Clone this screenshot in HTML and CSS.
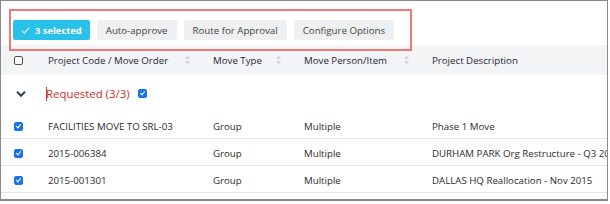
FILE: index.html
```html
<!DOCTYPE html>
<html>
<head>
<meta charset="utf-8">
<link rel="stylesheet" href="styles.css">
</head>
<body>
<div class="frame">
  <div class="toolbar">
    <button class="btn btn-primary"><svg class="chk" width="9" height="7" viewBox="0 0 9 7"><path d="M0.8 3.6 L3.3 6 L8.2 0.8" fill="none" stroke="#cdeff9" stroke-width="1.3"/></svg>3 selected</button>
    <button class="btn">Auto-approve</button>
    <button class="btn">Route for Approval</button>
    <button class="btn">Configure Options</button>
    <div class="highlight"></div>
  </div>
  <div class="grid head">
    <div class="cell cb"><span class="box"></span></div>
    <div class="cell">Project Code / Move Order<svg class="sort" width="5" height="10" viewBox="0 0 5 10"><path d="M0 4 L2.5 0.5 L5 4 Z M0 6 L5 6 L2.5 9.5 Z" fill="#d3d6da"/></svg></div>
    <div class="cell">Move Type<svg class="sort" width="5" height="10" viewBox="0 0 5 10"><path d="M0 4 L2.5 0.5 L5 4 Z M0 6 L5 6 L2.5 9.5 Z" fill="#d3d6da"/></svg></div>
    <div class="cell">Move Person/Item<svg class="sort" width="5" height="10" viewBox="0 0 5 10"><path d="M0 4 L2.5 0.5 L5 4 Z M0 6 L5 6 L2.5 9.5 Z" fill="#d3d6da"/></svg></div>
    <div class="cell">Project Description</div>
  </div>
  <div class="group">
    <svg class="chev" width="10" height="6" viewBox="0 0 10 6"><path d="M1 0.8 L5 4.8 L9 0.8" fill="none" stroke="#33405a" stroke-width="2"/></svg>
    <span class="cursor"></span><span class="gtitle">Requested (3/3)</span>
    <span class="box checked"></span>
  </div>
  <div class="grid row">
    <div class="cell cb"><span class="box checked"></span></div>
    <div class="cell">FACILITIES MOVE TO SRL-03</div>
    <div class="cell">Group</div>
    <div class="cell">Multiple</div>
    <div class="cell">Phase 1 Move</div>
  </div>
  <div class="grid row">
    <div class="cell cb"><span class="box checked"></span></div>
    <div class="cell">2015-006384</div>
    <div class="cell">Group</div>
    <div class="cell">Multiple</div>
    <div class="cell">DURHAM PARK Org Restructure - Q3 2015</div>
  </div>
  <div class="grid row">
    <div class="cell cb"><span class="box checked"></span></div>
    <div class="cell">2015-001301</div>
    <div class="cell">Group</div>
    <div class="cell">Multiple</div>
    <div class="cell">DALLAS HQ Reallocation - Nov 2015</div>
  </div>
</div>
</body>
</html>
```

FILE: styles.css
```css
html, body {
  margin: 0;
  padding: 0;
  background: #fff;
}
body {
  font-family: "Open Sans", "Liberation Sans", sans-serif;
  font-size: 9.7px;
  color: #2b2b2b;
}
.frame {
  width: 606px;
  height: 198px;
  border-left: 1px solid #8a8a8a;
  border-top: 1px solid #8a8a8a;
  border-right: 1px solid #8a8a8a;
  border-bottom: 2px solid #8a8a8a;
  overflow: hidden;
  background: #fff;
}
.toolbar {
  position: relative;
  display: flex;
  align-items: center;
  gap: 7px;
  padding: 19px 0 5px 12px;
  height: 20px;
}
.btn {
  height: 20px;
  border: none;
  border-radius: 2px;
  background: #eef0f2;
  color: #444;
  font-family: inherit;
  font-size: 9.7px;
  padding: 0 9px;
  display: flex;
  align-items: center;
}
.btn-primary {
  background: #27c1ea;
  color: #fff;
  font-weight: 700;
  font-size: 9.4px;
  padding: 0 8px 0 8px;
}
.chk {
  margin-right: 5px;
}
.highlight {
  position: absolute;
  left: 8px;
  top: 8px;
  width: 399px;
  height: 38px;
  border: 2px solid #f27878;
  pointer-events: none;
}
.grid {
  display: grid;
  grid-template-columns: 39px 165px 91px 128px 1fr;
}
.head {
  height: 30px;
  background: #f3f4f6;
}
.cell {
  display: flex;
  align-items: center;
  padding-left: 8px;
  white-space: nowrap;
  overflow: hidden;
  position: relative;
}
.head .cell {
  color: #26263a;
}
.cell.cb {
  padding-left: 13px;
}
.sort {
  margin-left: auto;
  margin-right: 15px;
  flex: none;
}
.box {
  display: inline-block;
  width: 9px;
  height: 9px;
  border: 1px solid #555;
  border-radius: 2px;
  background: #fff;
  box-sizing: border-box;
  position: relative;
  flex: none;
}
.box.checked {
  background: #1a73e8;
  border-color: #1a73e8;
}
.box.checked::after {
  content: "";
  position: absolute;
  left: 2px;
  top: 0px;
  width: 2px;
  height: 4px;
  border: solid #fff;
  border-width: 0 1.5px 1.5px 0;
  transform: rotate(40deg);
}
.group {
  height: 37px;
  display: flex;
  align-items: center;
  padding-left: 15px;
  position: relative;
}
.chev {
  margin-right: 20px;
  margin-top: 1px;
}
.cursor {
  width: 1px;
  height: 14px;
  background: #c0392b;
  margin-right: -1px;
}
.gtitle {
  color: #d12f2a;
  font-size: 11.4px;
  margin-right: 8px;
}
.row {
  height: 26px;
  border-bottom: 1px solid #e6e6e6;
}
.row .cell {
  padding-top: 2px;
}
```
